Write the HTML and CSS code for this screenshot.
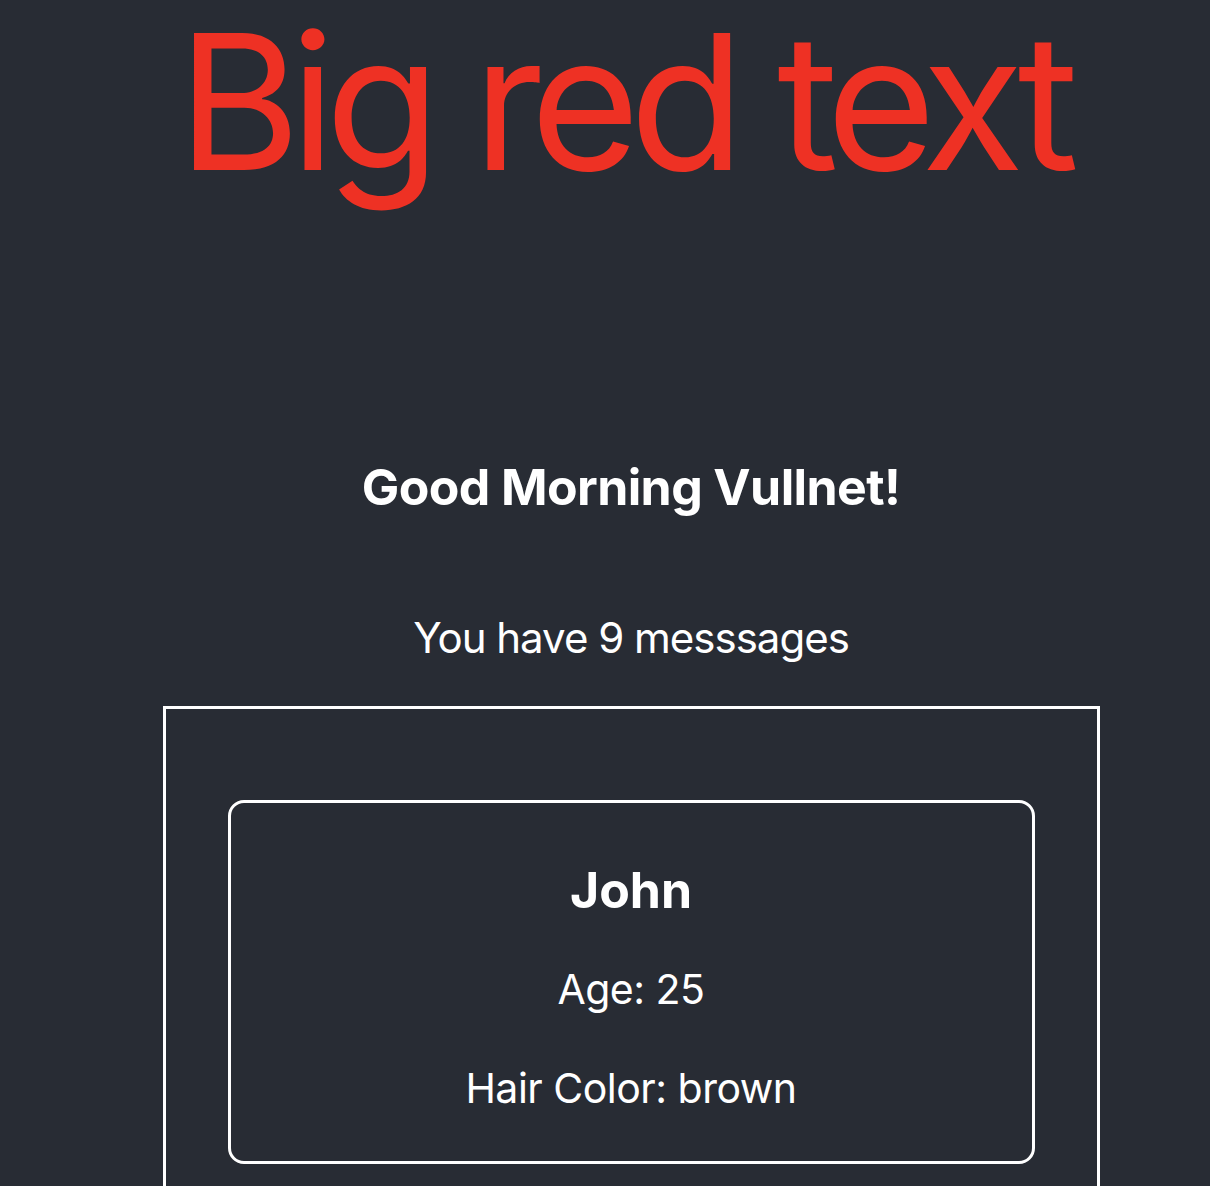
FILE: index.html
```html
<!DOCTYPE html>
<html>
<head>
<meta charset="utf-8">
<link rel="stylesheet" href="styles.css">
</head>
<body>
<div class="app">
  <h1 class="big">Big red text</h1>
  <h2 class="greeting">Good Morning Vullnet!</h2>
  <p class="messages">You have 9 messsages</p>
  <div class="outer">
    <div class="card">
      <h3 class="name">John</h3>
      <p class="info">Age: 25</p>
      <p class="info">Hair Color: brown</p>
    </div>
  </div>
</div>
</body>
</html>
```
FILE: styles.css
```css
html, body {
  margin: 0;
  padding: 0;
  background: #282c34;
  height: 100%;
}
body {
  font-family: Inter, "Noto Sans", sans-serif;
  color: #ffffff;
  overflow: hidden;
}
.app {
  padding-left: 52px;
  display: flex;
  flex-direction: column;
  align-items: center;
  text-align: center;
}
.big {
  margin: -11px 0 0 0;
  padding-right: 16px;
  font-size: 188px;
  line-height: 1.2;
  font-weight: 400;
  color: #ee3124;
  letter-spacing: -10.3px;
}
.greeting {
  margin: 242px 0 0 0;
  font-size: 50px;
  line-height: 1.2;
  font-weight: 700;
  letter-spacing: -0.6px;
}
.messages {
  margin: 96px 0 0 0;
  font-size: 42px;
  line-height: 1.2;
  letter-spacing: -1px;
}
.outer {
  box-sizing: border-box;
  margin-top: 43px;
  width: 937px;
  height: 600px;
  border: 3px solid #ffffff;
  padding: 91px 62px 0 62px;
}
.card {
  border: 3px solid #ffffff;
  border-radius: 16px;
  padding: 57px 0 0 0;
  height: 364px;
  box-sizing: border-box;
}
.name {
  margin: 0;
  font-size: 50px;
  line-height: 1.2;
  font-weight: 700;
}
.info {
  margin: 45px 0 0 0;
  font-size: 41px;
  line-height: 1.2;
  letter-spacing: -0.5px;
}
.info + .info {
  margin-top: 50px;
}
```
